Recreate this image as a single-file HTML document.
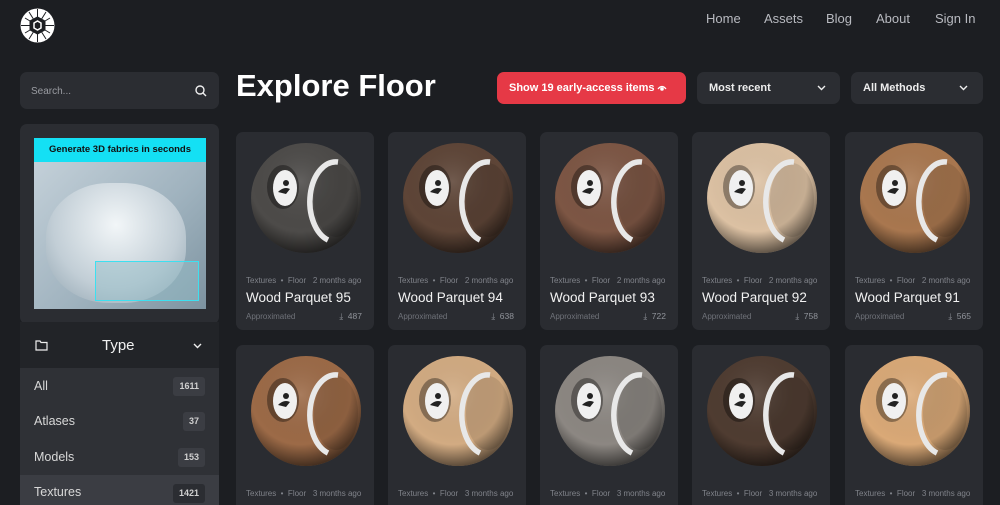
<!DOCTYPE html>
<html><head><style>
*{margin:0;padding:0;box-sizing:border-box}
html,body{width:1000px;height:505px;overflow:hidden}
body{background:#1c1e22;font-family:"Liberation Sans",sans-serif;color:#e8e8e8;position:relative}
.abs{position:absolute}
.nav a{position:absolute;top:11px;font-size:13px;color:#b8bac0}
.card{position:absolute;width:138px;height:198px;background:#2a2c31;border-radius:7px}
.card svg{position:absolute;left:14px;top:10px}
.meta{position:absolute;left:10px;top:144px;font-size:8px;color:#80838a;white-space:nowrap}
.title{position:absolute;left:10px;top:158px;font-size:13.5px;color:#f2f2f2;white-space:nowrap}
.sub{position:absolute;left:10px;top:180px;font-size:8px;color:#70737a}
.dl{position:absolute;right:12px;top:179px;font-size:8.5px;color:#90939a}
.btn{position:absolute;top:72px;height:32px;border-radius:7px;font-size:11px;font-weight:bold;line-height:32px;padding-left:12px}
.li{position:absolute;left:20px;width:199px;height:36px;font-size:12.5px;color:#d8d8d8;padding-left:14px;line-height:36px}
.li span{position:absolute;right:14px;top:9px;height:19px;line-height:19px;font-size:9px;font-weight:bold;background:#3b3d43;border-radius:3px;padding:0 6px;color:#d0d0d0}
</style></head><body>
<svg class="abs" style="left:20px;top:8px" width="35" height="35" viewBox="0 0 35 35"><circle cx="17.5" cy="17.5" r="17" fill="#fff"/><g stroke="#1c1e22" stroke-width="1" fill="none"><path d="M5 10L30 25M5 25L30 10M17.5 1V34M9 4L26 31M26 4L9 31M1 17.5H34"/><path d="M10 13L17.5 9L25 13V22L17.5 26L10 22Z" fill="#1c1e22"/></g><path d="M14 15L17.5 13L21 15V20L17.5 22L14 20Z" fill="none" stroke="#fff" stroke-width="1.5"/></svg>
<div class="nav"><a style="left:706px">Home</a><a style="left:764px">Assets</a><a style="left:826px">Blog</a><a style="left:876px">About</a><a style="left:935px">Sign In</a></div>

<div class="abs" style="left:20px;top:72px;width:199px;height:37px;background:#2b2d32;border-radius:7px;font-size:10px;color:#9a9ca2;padding:14px 11px">Search...
<svg class="abs" style="right:12px;top:13px" width="12" height="12" viewBox="0 0 12 12"><circle cx="5" cy="5" r="4" stroke="#eee" stroke-width="1.4" fill="none"/><path d="M8 8L11 11" stroke="#eee" stroke-width="1.4"/></svg></div>

<div class="abs" style="left:20px;top:124px;width:199px;height:200px;background:#2b2d32;border-radius:7px"></div>
<div class="abs" style="left:34px;top:138px;width:172px;height:171px;background:linear-gradient(135deg,#c8d4dc,#9fb2be 60%,#7d93a0);overflow:hidden">
<div class="abs" style="left:0;top:0;width:172px;height:24px;background:#14e0f4;color:#111;font-weight:bold;font-size:9.5px;text-align:center;line-height:24px">Generate 3D fabrics in seconds</div>
<div class="abs" style="left:12px;top:45px;width:140px;height:120px;border-radius:45%;background:radial-gradient(circle at 50% 35%,#f2f6f8,#c2ced6 60%,#8ea2ae)"></div>
<div class="abs" style="left:61px;top:123px;width:104px;height:40px;border:1px solid #3de0f0;background:rgba(150,190,200,.5)"></div>
</div>

<div class="abs" style="left:20px;top:322px;width:199px;height:50px;background:#222428"></div>
<svg class="abs" style="left:35px;top:340px" width="13" height="11" viewBox="0 0 13 11"><path d="M1 1H5L6 2.5H12V10H1Z" fill="none" stroke="#eee" stroke-width="1.2"/></svg>
<div class="abs" style="left:102px;top:337px;font-size:15px;color:#f0f0f0">Type</div>
<svg class="abs" style="left:193px;top:343px" width="9" height="6" viewBox="0 0 9 6"><path d="M1 1L4.5 4.5L8 1" stroke="#eee" stroke-width="1.4" fill="none"/></svg>
<div class="abs" style="left:20px;top:368px;width:199px;height:137px;background:#2f3136"></div>
<div class="li" style="top:368px">All<span>1611</span></div>
<div class="li" style="top:403px">Atlases<span>37</span></div>
<div class="li" style="top:439px">Models<span>153</span></div>
<div class="li" style="top:475px;height:30px;line-height:34px;background:#3b3d43">Textures<span style="background:#2b2d32">1421</span></div>

<div class="abs" style="left:236px;top:68px;font-size:31px;font-weight:bold;color:#fff">Explore Floor</div>
<div class="btn" style="left:497px;width:189px;background:#e63946;color:#fff">Show 19 early-access items
<svg class="abs" style="left:160px;top:12px" width="10" height="8" viewBox="0 0 10 8"><path d="M1 5Q5 0 9 5" stroke="#fff" stroke-width="1.3" fill="none"/><circle cx="5" cy="5" r="1.8" fill="#fff"/></svg></div>
<div class="btn" style="left:697px;width:143px;background:#2b2d32;color:#eee">Most recent
<svg class="abs" style="left:120px;top:13px" width="9" height="6" viewBox="0 0 9 6"><path d="M1 1L4.5 4.5L8 1" stroke="#eee" stroke-width="1.4" fill="none"/></svg></div>
<div class="btn" style="left:851px;width:132px;background:#2b2d32;color:#eee">All Methods
<svg class="abs" style="left:108px;top:13px" width="9" height="6" viewBox="0 0 9 6"><path d="M1 1L4.5 4.5L8 1" stroke="#eee" stroke-width="1.4" fill="none"/></svg></div>

<div id="grid"></div>
<script>
var xs=[236,388,540,692,845];
var r1=[["#4d4b49","95","487"],["#5e4537","94","638"],["#7d5644","93","722"],["#dcc1a3","92","758"],["#a9774f","91","565"]];
var r2=["#9c6a47","#d2ab82","#8c8782","#4f3c31","#daa977"];
var h="";
function sph(c,i){return '<svg width="112" height="112" viewBox="0 0 112 112"><defs><radialGradient id="g'+i+'" cx="45%" cy="35%" r="65%"><stop offset="0" stop-color="#fff" stop-opacity="0.12"/><stop offset="0.7" stop-color="#000" stop-opacity="0"/><stop offset="1" stop-color="#000" stop-opacity="0.55"/></radialGradient></defs><circle cx="56" cy="56" r="55" fill="'+c+'"/><circle cx="56" cy="56" r="55" fill="url(#g'+i+')"/><ellipse cx="86" cy="58" rx="22" ry="37" fill="#000" opacity=".1"/><ellipse cx="33" cy="45" rx="16" ry="22" fill="#000" opacity=".35"/><ellipse cx="35" cy="46" rx="12" ry="18" fill="#f0f0f0"/><path d="M28 50Q34 44 40 47L36 52Z" fill="#222"/><circle cx="36" cy="41" r="3" fill="#222"/><path d="M88 20A26 40 0 0 0 78 98" stroke="#e8e8e8" stroke-width="5.5" fill="none"/></svg>';}
for(var i=0;i<5;i++){var d=r1[i];
h+='<div class="card" style="left:'+xs[i]+'px;top:132px">'+sph(d[0],i)+'<div class="meta">Textures &nbsp;•&nbsp; Floor &nbsp; 2 months ago</div><div class="title">Wood Parquet '+d[1]+'</div><div class="sub">Approximated</div><div class="dl">⤓ &nbsp;'+d[2]+'</div></div>';
h+='<div class="card" style="left:'+xs[i]+'px;top:345px;height:160px;border-radius:7px 7px 0 0">'+sph(r2[i],i+5)+'<div class="meta">Textures &nbsp;•&nbsp; Floor &nbsp; 3 months ago</div></div>';}
document.getElementById("grid").innerHTML=h;
</script>
</body></html>
